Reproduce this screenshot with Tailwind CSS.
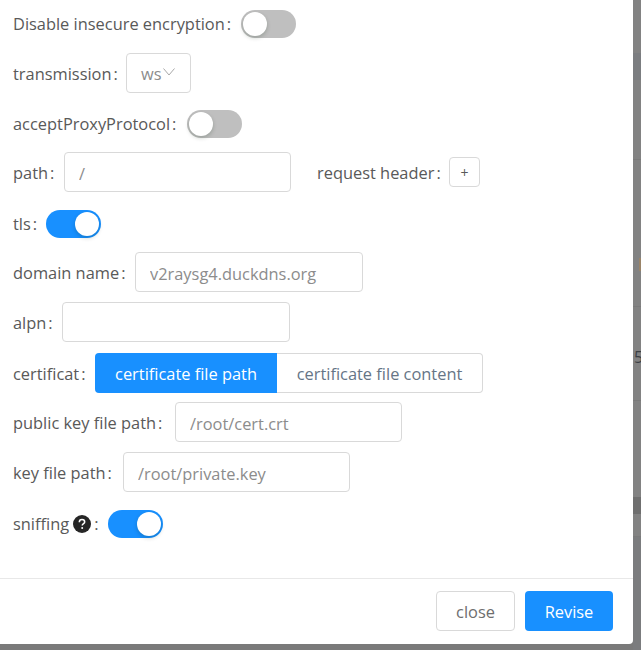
<!DOCTYPE html>
<html lang="en">
<head>
  <meta charset="UTF-8">
  <title>Edit inbound</title>
  <script src="https://cdn.jsdelivr.net/npm/@tailwindcss/browser@4"></script>
</head>
<body class="bg-[#7a7a7a] font-['Open_Sans',sans-serif] text-[16.4px] text-[#595959]">
  <div class="flex w-[641px] h-[650px] overflow-hidden">
    <!-- modal -->
    <div class="w-[633px] h-[644px] shrink-0 bg-white rounded-br-[4px] flex flex-col">
      <div class="h-[578px] pl-[13px]">
        <div class="flex items-center h-[40px] mt-[4px]">
          <label class="w-[228px] whitespace-nowrap">Disable insecure encryption<span class="ml-[2px]">:</span></label>
          <div class="w-[55px] h-[28px] rounded-full bg-[#bfbfbf] relative"><span class="absolute left-[2px] top-[2px] w-[24px] h-[24px] rounded-full bg-white shadow-[0_2px_4px_rgba(0,35,11,0.2)]"></span></div>
        </div>
        <div class="flex items-center h-[40px] mt-[9px]">
          <label class="w-[113px] pt-[2px] whitespace-nowrap">transmission<span class="ml-[2px]">:</span></label>
          <div class="w-[65px] h-[40px] border border-[#d9d9d9] rounded-[4px] flex items-center pl-[14px] text-[#8c8c8c]">
            <span class="pt-[2px]">ws</span>
            <svg class="ml-[1px] mb-[3px]" width="12" height="8" viewBox="0 0 12 8" fill="none" stroke="#a8a8a8" stroke-width="1"><path d="M0.5 0.5 L6 7 L11.5 0.5"/></svg>
          </div>
        </div>
        <div class="flex items-center h-[40px] mt-[11px]">
          <label class="w-[174px] whitespace-nowrap">acceptProxyProtocol<span class="ml-[2px]">:</span></label>
          <div class="w-[55px] h-[28px] rounded-full bg-[#bfbfbf] relative"><span class="absolute left-[2px] top-[2px] w-[24px] h-[24px] rounded-full bg-white shadow-[0_2px_4px_rgba(0,35,11,0.2)]"></span></div>
        </div>
        <div class="flex items-center h-[40px] mt-[8px]">
          <label class="w-[51px] pt-[3px] whitespace-nowrap">path<span class="ml-[2px]">:</span></label>
          <input class="w-[227px] h-[40px] border border-[#d9d9d9] rounded-[4px] px-[14px] pt-[3px] text-[#8c8c8c] outline-none" value="/">
          <label class="ml-[26px] w-[132px] pt-[3px] whitespace-nowrap">request header<span class="ml-[2px]">:</span></label>
          <button class="w-[31px] h-[30px] border border-[#d9d9d9] rounded-[4px] flex items-center justify-center text-[#595959] text-[14px]">+</button>
        </div>
        <div class="flex items-center h-[40px] mt-[12px]">
          <label class="w-[33px] whitespace-nowrap">tls<span class="ml-[2px]">:</span></label>
          <div class="w-[55px] h-[28px] rounded-full bg-[#1890ff] relative"><span class="absolute right-[2px] top-[2px] w-[24px] h-[24px] rounded-full bg-white shadow-[0_2px_4px_rgba(0,35,11,0.2)]"></span></div>
        </div>
        <div class="flex items-center h-[40px] mt-[8px]">
          <label class="w-[122px] pt-[3px] whitespace-nowrap">domain name<span class="ml-[2px]">:</span></label>
          <input class="w-[228px] h-[40px] border border-[#d9d9d9] rounded-[4px] px-[14px] pt-[3px] text-[#8c8c8c] outline-none" value="v2raysg4.duckdns.org">
        </div>
        <div class="flex items-center h-[40px] mt-[10px]">
          <label class="w-[49px] pt-[2px] whitespace-nowrap">alpn<span class="ml-[2px]">:</span></label>
          <input class="w-[228px] h-[40px] border border-[#d9d9d9] rounded-[4px] px-[14px] text-[#8c8c8c] outline-none">
        </div>
        <div class="flex items-center h-[40px] mt-[11px]">
          <label class="w-[82px] pt-[2px] whitespace-nowrap">certificat<span class="ml-[2px]">:</span></label>
          <div class="flex h-[40px]">
            <div class="w-[182px] pt-[2px] bg-[#1890ff] text-white rounded-l-[4px] flex items-center justify-center">certificate file path</div>
            <div class="w-[206px] pt-[2px] border border-l-0 border-[#d9d9d9] rounded-r-[4px] text-[#667586] flex items-center justify-center">certificate file content</div>
          </div>
        </div>
        <div class="flex items-center h-[40px] mt-[9px]">
          <label class="w-[162px] pt-[3px] whitespace-nowrap">public key file path<span class="ml-[2px]">:</span></label>
          <input class="w-[227px] h-[40px] border border-[#d9d9d9] rounded-[4px] px-[14px] pt-[3px] text-[#8c8c8c] outline-none" value="/root/cert.crt">
        </div>
        <div class="flex items-center h-[40px] mt-[10px]">
          <label class="w-[110px] pt-[3px] whitespace-nowrap">key file path<span class="ml-[2px]">:</span></label>
          <input class="w-[227px] h-[40px] border border-[#d9d9d9] rounded-[4px] px-[14px] pt-[3px] text-[#8c8c8c] outline-none" value="/root/private.key">
        </div>
        <div class="flex items-center h-[40px] mt-[12px]">
          <label class="w-[95px] flex items-center whitespace-nowrap">sniffing
            <svg class="ml-[4px]" width="18" height="18" viewBox="0 0 18 18"><circle cx="9" cy="9" r="9" fill="#262626"/><path d="M6.3 7.2 C6.3 5.6 7.5 4.6 9 4.6 C10.6 4.6 11.7 5.6 11.7 6.9 C11.7 8.6 9.2 8.7 9.2 10.6" fill="none" stroke="#fff" stroke-width="1.5"/><circle cx="9.2" cy="13" r="1" fill="#fff"/></svg>
            <span class="ml-[3px]">:</span>
          </label>
          <div class="w-[55px] h-[28px] rounded-full bg-[#1890ff] relative"><span class="absolute right-[2px] top-[2px] w-[24px] h-[24px] rounded-full bg-white shadow-[0_2px_4px_rgba(0,35,11,0.2)]"></span></div>
        </div>
      </div>
      <div class="h-[66px] border-t border-[#e8e8e8] flex justify-end items-start pt-[12px] pr-[20px] gap-[10px]">
        <button class="w-[79px] h-[40px] pt-[2px] border border-[#d9d9d9] rounded-[4px] text-[#6e6e6e]">close</button>
        <button class="w-[88px] h-[40px] pt-[2px] bg-[#1890ff] rounded-[4px] text-white">Revise</button>
      </div>
    </div>
    <!-- page behind the mask -->
    <div class="w-[8px] h-[650px] flex flex-col bg-[#828282] text-[#3b3f45] overflow-hidden">
      <div class="h-[53px] shrink-0"></div>
      <div class="h-[27px] shrink-0 bg-[#7b7d80]"></div>
      <div class="h-[80px] shrink-0 border-b border-[#7a7a7a]"></div>
      <div class="h-[98px] shrink-0"></div>
      <div class="h-[49px] shrink-0 flex items-start justify-end border-b border-[#7a7a7a]"><span class="w-[2px] h-[13px] bg-[#9a8468]"></span></div>
      <div class="h-[94px] shrink-0 text-[16px] leading-[20px] pt-[40px] pl-[1px] border-b border-[#7a7a7a]">5</div>
      <div class="h-[96px] shrink-0"></div>
      <div class="h-[17px] shrink-0 bg-[#6f6f6f]"></div>
      <div class="h-[23px] shrink-0 border-b border-[#7a7a7a]"></div>
      <div class="grow bg-[#7b7c7e]"></div>
    </div>
  </div>
</body>
</html>
